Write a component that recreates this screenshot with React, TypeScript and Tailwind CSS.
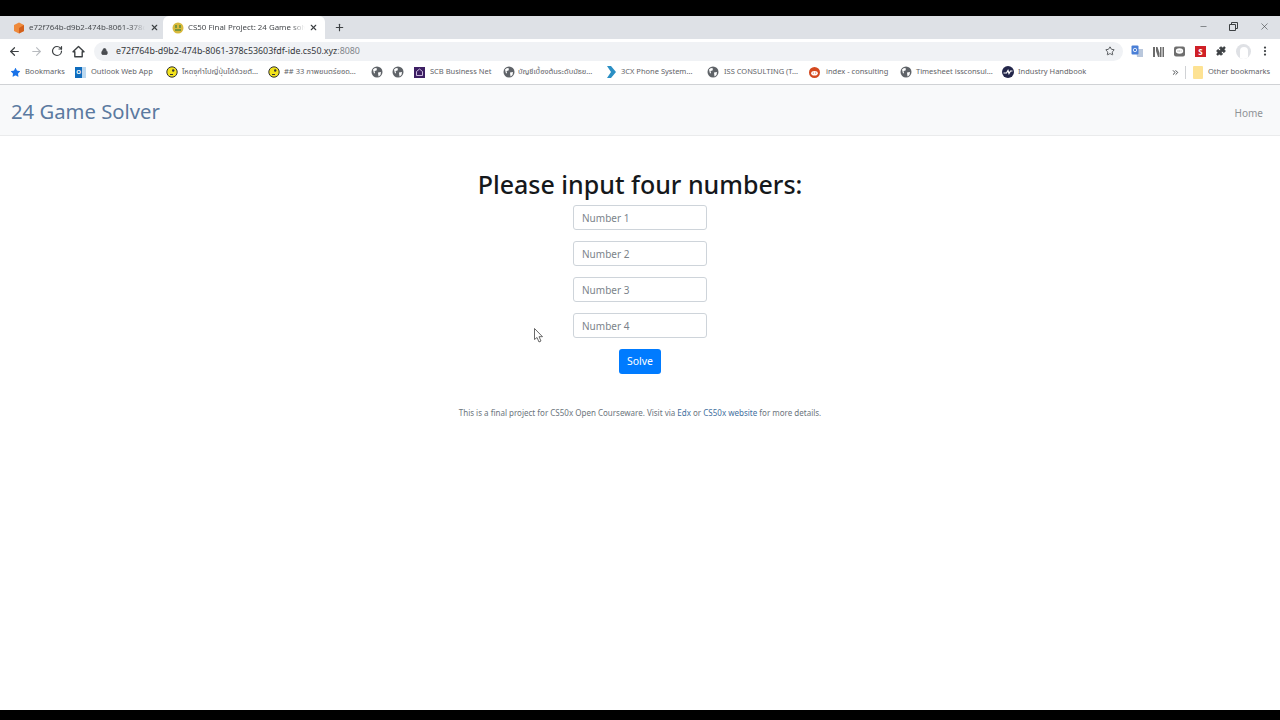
import { ArrowLeft, ArrowRight, RotateCw, Lock, Star, X, Plus, Minus, MoreVertical, Puzzle, ChevronsRight } from 'lucide-react';

const FONT = "font-['Noto_Sans','Noto_Sans_Thai',sans-serif]";

// globe favicon used by most of the bookmarks
function Globe() {
  return (
    <svg width="12" height="12" viewBox="0 0 12 12" className="shrink-0">
      <circle cx="6" cy="6" r="5.5" fill="#5f6368" />
      <path d="M2 3.5l2-1.5 2 .5-.5 2-2 .5.5 2-1 .5zM7 6.5l3-.5-.5 3-2 1.5z" fill="#fff" />
    </svg>
  );
}

function Smiley() {
  return (
    <svg width="12" height="12" viewBox="0 0 12 12" className="shrink-0">
      <circle cx="6" cy="6" r="5.2" fill="#f2e21c" stroke="#333" strokeWidth="1" />
      <circle cx="7.200" cy="4.500" r="1.200" fill="#333" />
      <path d="M4 8.500h3" stroke="#333" strokeWidth="1" />
    </svg>
  );
}

function Bookmark({ icon, label, width, className }: { icon: React.ReactNode; label?: string; width?: string; className?: string }) {
  return (
    <div className={`flex items-center shrink-0 ${className ?? ''}`}>
      {icon}
      {label && <span className={`text-[7.5px] text-[#5f6368] whitespace-nowrap ${width ?? ''}`}>{label}</span>}
    </div>
  );
}

function NumberInput({ placeholder }: { placeholder: string }) {
  return (
    <input
      placeholder={placeholder}
      className="block w-[134px] h-[25px] rounded-[3px] border border-[#ced4da] bg-white px-2 text-[10px] placeholder:text-[#7b838a] outline-none"
    />
  );
}

export default function App() {
  return (
    <div className={`h-[720px] w-[1280px] overflow-hidden flex flex-col bg-white ${FONT}`}>
      <div className="h-4 bg-black shrink-0" />

      {/* Tab strip */}
      <div className="h-[23px] bg-[#dee1e6] flex items-end shrink-0">
        <div className="w-[163px] h-[23px] flex items-center pl-[13px] pr-[4px]">
          <svg width="12" height="12" viewBox="0 0 12 12" className="shrink-0">
            <path d="M6 .5l5 2.500v6l-5 2.500-5-2.500V3z" fill="#ee8a3c" />
            <path d="M6 6l5-3v6l-5 2.500z" fill="#d2601c" />
          </svg>
          <span className="ml-[4px] w-[116px] overflow-hidden whitespace-nowrap text-[7.9px] text-[#4a4d51] [mask-image:linear-gradient(to_right,black_88%,transparent)]">e72f764b-d9b2-474b-8061-378c</span>
          <X size={9} strokeWidth={3} className="ml-auto text-[#3c4043]" />
        </div>
        <div className="w-[162px] h-[23px] bg-white rounded-t-[6px] flex items-center pl-[9px] pr-[7px]">
          <svg width="12" height="12" viewBox="0 0 12 12" className="shrink-0">
            <circle cx="6" cy="6" r="5.5" fill="#d8b93c" />
            <path d="M4 3v3M8 3v3M3 8h6" stroke="#5c8a3a" strokeWidth="1.500" />
          </svg>
          <span className="ml-[4px] w-[117px] overflow-hidden whitespace-nowrap text-[7.9px] text-[#45484c] [mask-image:linear-gradient(to_right,black_88%,transparent)]">CS50 Final Project: 24 Game solver</span>
          <X size={9} strokeWidth={3} className="ml-auto text-[#3c4043]" />
        </div>
        <div className="h-[23px] flex items-center ml-[9px]">
          <Plus size={11} strokeWidth={2.5} className="text-[#3c4043]" />
        </div>
        <div className="ml-auto h-[23px] flex items-center gap-[21px] pr-[10px] pb-[3px] text-[#3c4043]">
          <Minus size={9} strokeWidth={1.5} />
          <svg width="9" height="9" viewBox="0 0 9 9" fill="none" stroke="currentColor">
            <path d="M.5 2.500h6v6h-6zM2.500 2.500v-2h6v6h-2" />
          </svg>
          <X size={11} strokeWidth={1.3} />
        </div>
      </div>

      {/* Toolbar */}
      <div className="h-[22px] mt-px bg-white flex items-center shrink-0 pl-[8px] text-[#5f6368]">
        <ArrowLeft size={13} strokeWidth={2.2} className="text-[#3c4043]" />
        <ArrowRight size={13} strokeWidth={2} className="ml-[9px] text-[#b8bbbf]" />
        <RotateCw size={12} strokeWidth={2.4} className="ml-[8px] text-[#3c4043]" />
        <svg width="13" height="13" viewBox="0 0 13 13" fill="none" stroke="#3c4043" strokeWidth="1.400" className="ml-[9px] shrink-0">
          <path d="M6.500 1.500L12 6.800h-1.800v5H2.800v-5H1z" strokeLinejoin="round" />
        </svg>
        <div className="ml-[9px] w-[1029px] h-[19px] rounded-full bg-[#f0f2f5] flex items-center pl-[7px] pr-[8px] shrink-0">
          <Lock size={7} strokeWidth={3} className="text-[#4a4d51]" fill="#4a4d51" />
          <span className="ml-[8px] pb-px text-[8.9px] text-[#36393c] whitespace-nowrap">
            e72f764b-d9b2-474b-8061-378c53603fdf-ide.cs50.xyz<span className="text-[#80868b]">:8080</span>
          </span>
          <Star size={10} strokeWidth={2} className="ml-auto text-[#3c4043]" />
        </div>
        <div className="ml-[8px] flex items-center gap-[10px] flex-1">
          <svg width="12" height="12" viewBox="0 0 12 12" className="shrink-0">
            <path d="M5 4h7v8H6z" fill="#b9c7dc" />
            <rect x="0.500" y="0.500" width="7" height="9" rx="1" fill="#4a7fd6" />
            <circle cx="4" cy="5" r="1.700" fill="none" stroke="#fff" strokeWidth="0.800" />
          </svg>
          <svg width="11" height="11" viewBox="0 0 11 11" className="shrink-0 text-[#6b6b6b]" fill="currentColor">
            <path d="M0 1h2v10H0zM3 1h1.500l2 6V11H5L3 5zM7 1h1.500v10H7zM9.500 1H11v10H9.500z" />
          </svg>
          <svg width="11" height="11" viewBox="0 0 11 11" className="shrink-0">
            <rect width="11" height="10" y="0.500" rx="2" fill="#6e6e6e" />
            <ellipse cx="5.500" cy="5" rx="3.700" ry="2.700" fill="#fff" />
            <path d="M3.500 5h4" stroke="#6e6e6e" strokeWidth="0.800" strokeDasharray="1 0.800" />
          </svg>
          <div className="w-[11px] h-[11px] bg-[#cf2027] text-white text-[8px] font-bold leading-[11px] text-center shrink-0">S</div>
          <Puzzle size={10} fill="#3c4043" className="text-[#3c4043] shrink-0" />
          <div className="w-[15px] h-[15px] rounded-full bg-[#dfe1e5] shrink-0 flex items-end justify-center overflow-hidden">
            <div className="w-[8px] h-[12px] rounded-t-full bg-white" />
          </div>
          <MoreVertical size={12} strokeWidth={2.5} className="text-[#3c4043] shrink-0 -ml-[2px]" />
        </div>
      </div>

      {/* Bookmarks bar */}
      <div className="h-[23px] bg-white border-b border-[#d0d2d5] flex items-center shrink-0 pl-[10px] pr-[10px] pb-[2px]">
        <Bookmark className="gap-[4px]" icon={<Star size={11} fill="#1a73e8" strokeWidth={0} />} label="Bookmarks" width="w-[39px]" />
        <Bookmark
          className="ml-[11px] gap-[5px]"
          icon={
            <div className="w-[11px] h-[11px] bg-[#bcd8ef] shrink-0">
              <div className="w-[7px] h-[11px] bg-[#0f6cbd] text-white text-[6px] font-bold leading-[11px] text-center">O</div>
            </div>
          }
          label="Outlook Web App"
          width="w-[64px]"
        />
        <Bookmark className="ml-[11px] gap-[4px]" icon={<Smiley />} label="โหดจุกำไปญี่ปุ่นได้ด้วยตั..." width="w-[73px]" />
        <Bookmark className="ml-[13px] gap-[4px]" icon={<Smiley />} label="## 33 ภาพยนตร์ยอด..." width="w-[75px]" />
        <Bookmark className="ml-[12px]" icon={<Globe />} />
        <Bookmark className="ml-[9px]" icon={<Globe />} />
        <Bookmark
          className="ml-[10px] gap-[5px]"
          icon={
            <svg width="11" height="11" viewBox="0 0 11 11" className="shrink-0">
              <rect width="11" height="11" fill="#3d1f63" />
              <path d="M5.500 2L8.500 4.500V8.500H2.500V4.500z" fill="none" stroke="#d9c8ea" strokeWidth="0.900" />
            </svg>
          }
          label="SCB Business Net"
          width="w-[61px]"
        />
        <Bookmark className="ml-[12px] gap-[3px]" icon={<Globe />} label="บัญชีเบื้องต้นระดับมัธย..." width="w-[73px]" />
        <Bookmark
          className="ml-[16px] gap-[5px]"
          icon={
            <svg width="9" height="12" viewBox="0 0 9 12" className="shrink-0">
              <path d="M0 0h4l5 6-5 6H0l4-6z" fill="#2b8fc4" />
            </svg>
          }
          label="3CX Phone System..."
          width="w-[71px]"
        />
        <Bookmark className="ml-[15px] gap-[5px]" icon={<Globe />} label="ISS CONSULTING (T..." width="w-[75px]" />
        <Bookmark
          className="ml-[10px] gap-[6px]"
          icon={
            <svg width="11" height="11" viewBox="0 0 11 11" className="shrink-0">
              <circle cx="5.500" cy="5.500" r="5.500" fill="#d4491f" />
              <ellipse cx="5.500" cy="6.300" rx="3.300" ry="2.300" fill="#fff" />
              <circle cx="4.300" cy="6" r="0.600" fill="#d4491f" />
              <circle cx="6.700" cy="6" r="0.600" fill="#d4491f" />
            </svg>
          }
          label="index - consulting"
          width="w-[63px]"
        />
        <Bookmark className="ml-[11px] gap-[4px]" icon={<Globe />} label="Timesheet issconsul..." width="w-[76px]" />
        <Bookmark
          className="ml-[10px] gap-[4px]"
          icon={
            <svg width="12" height="12" viewBox="0 0 12 12" className="shrink-0">
              <circle cx="6" cy="6" r="6" fill="#23264a" />
              <path d="M1.500 7L4.500 7L6 4.500L7 7.500L8.500 5H10.500" fill="none" stroke="#fff" strokeWidth="1.200" />
            </svg>
          }
          label="Industry Handbook"
          width="w-[69px]"
        />
        <ChevronsRight size={9} strokeWidth={2.5} className="ml-auto text-[#3c4043]" />
        <div className="w-px h-[13px] bg-[#d0d2d5] ml-[5px]" />
        <Bookmark
          className="ml-[7px] gap-[5px]"
          icon={<div className="w-[10px] h-[13px] rounded-[1px] bg-[#fde293] shrink-0" />}
          label="Other bookmarks"
          width="w-[62px]"
        />
      </div>

      {/* Page navbar */}
      <nav className="h-[51px] bg-[#f8f9fa] border-b border-[#eaebec] flex items-center justify-between shrink-0 pl-[11px] pr-[17px]">
        <span className="text-[20.25px] mt-[2px] text-[#5b7aa0]">24 Game Solver</span>
        <span className="text-[10px] text-[#8f9397] mt-[6px]">Home</span>
      </nav>

      {/* Form */}
      <main className="flex-1 flex flex-col items-center pt-[30px]">
        <h1 className="text-[25px] leading-[36px] font-medium text-[#15181b]">Please input four numbers:</h1>
        <div className="mt-[3px] flex flex-col gap-[11px]">
          <NumberInput placeholder="Number 1" />
          <NumberInput placeholder="Number 2" />
          <NumberInput placeholder="Number 3" />
          <NumberInput placeholder="Number 4" />
        </div>
        <button className="mt-[11px] w-[42px] h-[25px] rounded-[3px] bg-[#007bff] text-white text-[10.5px]">Solve</button>
        <p className="mt-[33px] text-[8px] text-[#6c757d]">
          This is a final project for CS50x Open Courseware. Visit via <a className="text-[#3f6f9e]">Edx</a> or{' '}
          <a className="text-[#3f6f9e]">CS50x website</a> for more details.
        </p>
      </main>

      {/* Mouse pointer in the recording */}
      <svg width="10" height="15" viewBox="0 0 10 15" className="absolute left-[534px] top-[328px]">
        <path d="M.5.5v11l2.500-2 2 4.500 2-1-2-4.300h3.500z" fill="#fff" stroke="#444" strokeWidth="0.8" />
      </svg>

      <div className="h-[10px] bg-black shrink-0" />
    </div>
  );
}
